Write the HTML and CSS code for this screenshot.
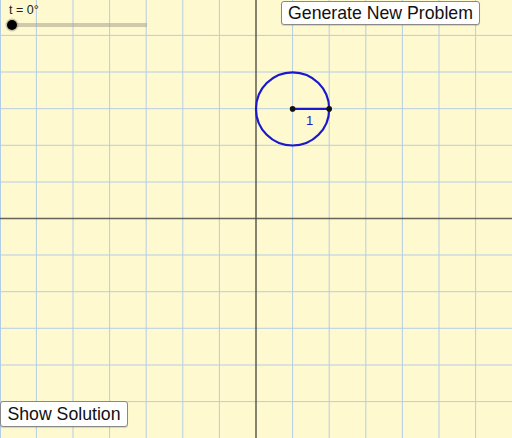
FILE: index.html
```html
<!DOCTYPE html>
<html>
<head>
<meta charset="utf-8">
<link rel="stylesheet" href="styles.css">
</head>
<body>
<div class="applet">
  <svg class="canvas" width="512" height="438" viewBox="0 0 512 438">
    <g class="grid">
      <line x1="36.4" y1="0" x2="36.4" y2="438"/>
      <line x1="73" y1="0" x2="73" y2="438"/>
      <line x1="109.6" y1="0" x2="109.6" y2="438"/>
      <line x1="146.2" y1="0" x2="146.2" y2="438"/>
      <line x1="182.8" y1="0" x2="182.8" y2="438"/>
      <line x1="219.4" y1="0" x2="219.4" y2="438"/>
      <line x1="292.6" y1="0" x2="292.6" y2="438"/>
      <line x1="329.2" y1="0" x2="329.2" y2="438"/>
      <line x1="365.8" y1="0" x2="365.8" y2="438"/>
      <line x1="402.4" y1="0" x2="402.4" y2="438"/>
      <line x1="439" y1="0" x2="439" y2="438"/>
      <line x1="475.6" y1="0" x2="475.6" y2="438"/>
      <line x1="0.5" y1="0" x2="0.5" y2="438"/>
      <line x1="0" y1="35.4" x2="512" y2="35.4"/>
      <line x1="0" y1="72" x2="512" y2="72"/>
      <line x1="0" y1="108.7" x2="512" y2="108.7"/>
      <line x1="0" y1="145.3" x2="512" y2="145.3"/>
      <line x1="0" y1="182" x2="512" y2="182"/>
      <line x1="0" y1="255" x2="512" y2="255"/>
      <line x1="0" y1="291.7" x2="512" y2="291.7"/>
      <line x1="0" y1="328.3" x2="512" y2="328.3"/>
      <line x1="0" y1="365" x2="512" y2="365"/>
      <line x1="0" y1="401.6" x2="512" y2="401.6"/>
    </g>
    <g class="axes">
      <line x1="0" y1="218.5" x2="512" y2="218.5"/>
      <line x1="256" y1="0" x2="256" y2="438"/>
    </g>
    <circle class="circ" cx="292.6" cy="108.9" r="36.6"/>
    <line class="radius" x1="292.6" y1="108.9" x2="329.2" y2="108.9"/>
    <circle class="pt" cx="292.6" cy="108.9" r="2.8"/>
    <circle class="pt" cx="329.2" cy="108.9" r="2.8"/>
    <text class="lbl" x="306" y="125">1</text>
    <text class="tlabel" x="9" y="14">t = 0°</text>
    <line class="track" x1="12" y1="25" x2="147" y2="25"/>
    <circle class="halo" cx="12" cy="25" r="6.5"/>
    <circle class="knob" cx="12" cy="25" r="5"/>
  </svg>
  <button class="btn gen">Generate New Problem</button>
  <button class="btn show">Show Solution</button>
</div>
</body>
</html>
```
FILE: styles.css
```css
html, body {
  margin: 0;
  padding: 0;
}
body {
  font-family: "Liberation Sans", Arial, sans-serif;
}
.applet {
  position: relative;
  width: 512px;
  height: 438px;
  background: #fff9cf;
  overflow: hidden;
}
.canvas {
  display: block;
}
.grid line {
  stroke: #b4cde6;
  stroke-width: 1;
}
.axes line {
  stroke: #4a4a44;
  stroke-opacity: 0.85;
  stroke-width: 1.6;
}
.circ {
  fill: none;
  stroke: #1a1acc;
  stroke-width: 2.2;
}
.radius {
  stroke: #1a1acc;
  stroke-width: 2.2;
}
.pt {
  fill: #111;
}
.lbl {
  font-family: "Liberation Sans", Arial, sans-serif;
  font-size: 13px;
  fill: #1a1acc;
}
.tlabel {
  font-family: "Liberation Sans", Arial, sans-serif;
  font-size: 12.5px;
  fill: #222;
}
.track {
  stroke: #a9a48f;
  stroke-opacity: 0.55;
  stroke-width: 4;
}
.halo {
  fill: #8a8670;
  fill-opacity: 0.45;
}
.knob {
  fill: #000;
}
.btn {
  position: absolute;
  font-family: "Liberation Sans", Arial, sans-serif;
  font-size: 17.7px;
  color: #111;
  background: #fff;
  border: 1px solid #888;
  border-radius: 3px;
  padding: 0;
  margin: 0;
  line-height: 22px;
  text-align: center;
  box-shadow: 0 1px 1px rgba(0,0,0,0.15);
}
.gen {
  left: 281px;
  top: 1px;
  width: 199px;
  height: 24px;
}
.show {
  left: 0;
  top: 401px;
  width: 128px;
  height: 26px;
}
```
